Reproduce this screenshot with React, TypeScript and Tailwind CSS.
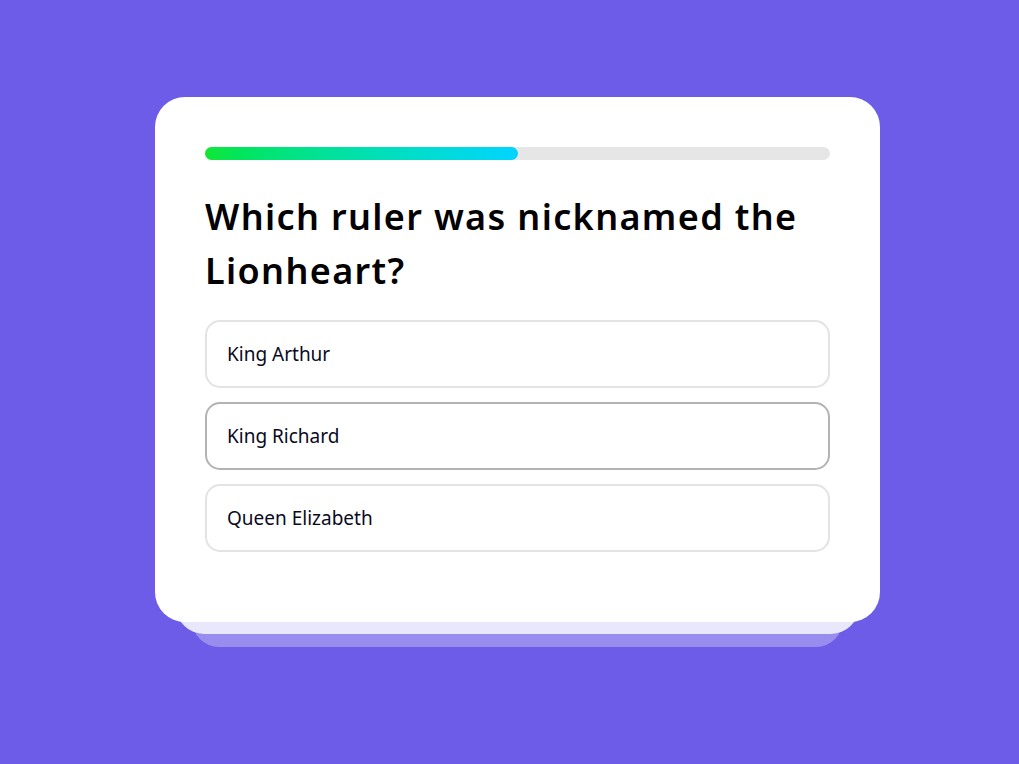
import React from "react";

const options = [
  { label: "King Arthur", active: false },
  { label: "King Richard", active: true },
  { label: "Queen Elizabeth", active: false },
];

export default function App() {
  return (
    <div className="min-h-screen w-full bg-[#6c5ce7] pl-[155px] pt-[97px] font-['Noto_Sans',sans-serif]">
      <div className="relative w-[725px]">
        <div className="absolute left-[37px] right-[37px] top-[40px] bottom-[-25px] rounded-[27px] bg-[#988dee]" />
        <div className="absolute left-[21px] right-[21px] top-[20px] bottom-[-12px] rounded-[28px] bg-[#e9e7fb]" />
        <div className="relative rounded-[30px] bg-white px-[50px] pt-[50px] pb-[70px]">
          <div className="h-[13px] w-full rounded-full bg-[#e6e6e6]">
            <div
              className="h-full rounded-full bg-gradient-to-r from-[#12e633] to-[#00d4ff]"
              style={{ width: "50%" }}
            />
          </div>
          <h1 className="mt-[30px] text-[36px] font-semibold leading-[54px] tracking-[1.35px] text-black">
            Which ruler was nicknamed the Lionheart?
          </h1>
          <div className="mt-[22px] flex flex-col gap-[14px]">
            {options.map((o) => (
              <div
                key={o.label}
                className={
                  "flex h-[68px] items-center rounded-[15px] border-2 px-[20px] text-[19px] text-[#0a0a1e] " +
                  (o.active ? "border-[#b3b3b3]" : "border-[#e3e3e3]")
                }
              >
                {o.label}
              </div>
            ))}
          </div>
        </div>
      </div>
    </div>
  );
}
